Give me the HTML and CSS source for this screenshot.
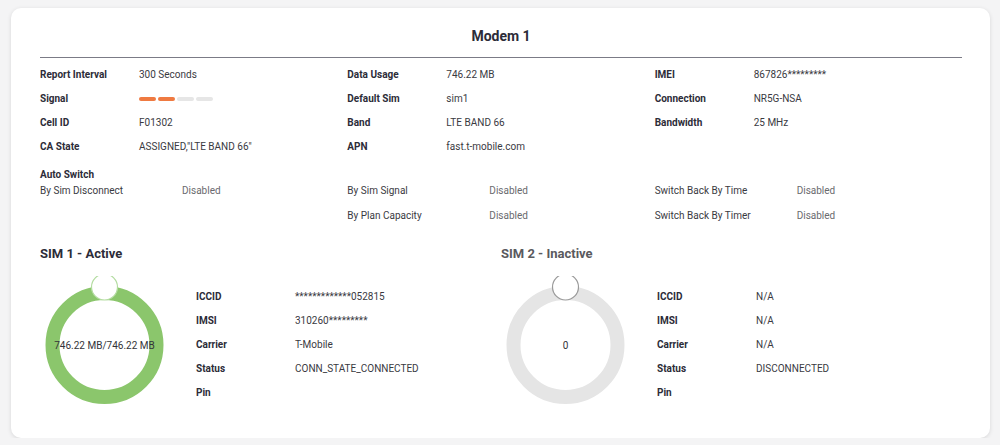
FILE: index.html
```html
<!DOCTYPE html>
<html>
<head>
<meta charset="utf-8">
<link rel="stylesheet" href="styles.css">
</head>
<body>
<div class="card">
  <div class="title">Modem 1</div>

  <div class="info-grid">
    <div class="kv"><span class="k">Report Interval</span><span class="v">300 Seconds</span></div>
    <div class="kv"><span class="k">Data Usage</span><span class="v">746.22 MB</span></div>
    <div class="kv"><span class="k">IMEI</span><span class="v">867826*********</span></div>

    <div class="kv"><span class="k">Signal</span><span class="v signal"><i class="bar on"></i><i class="bar on"></i><i class="bar"></i><i class="bar"></i></span></div>
    <div class="kv"><span class="k">Default Sim</span><span class="v">sim1</span></div>
    <div class="kv"><span class="k">Connection</span><span class="v">NR5G-NSA</span></div>

    <div class="kv"><span class="k">Cell ID</span><span class="v">F01302</span></div>
    <div class="kv"><span class="k">Band</span><span class="v">LTE BAND 66</span></div>
    <div class="kv"><span class="k">Bandwidth</span><span class="v">25 MHz</span></div>

    <div class="kv"><span class="k">CA State</span><span class="v">ASSIGNED,"LTE BAND 66"</span></div>
    <div class="kv"><span class="k">APN</span><span class="v">fast.t-mobile.com</span></div>
    <div class="kv"></div>
  </div>

  <div class="subhead">Auto Switch</div>
  <div class="switch-grid">
    <div class="kv sw"><span class="k">By Sim Disconnect</span><span class="v">Disabled</span></div>
    <div class="kv sw"><span class="k">By Sim Signal</span><span class="v">Disabled</span></div>
    <div class="kv sw"><span class="k">Switch Back By Time</span><span class="v">Disabled</span></div>

    <div class="kv sw"></div>
    <div class="kv sw"><span class="k">By Plan Capacity</span><span class="v">Disabled</span></div>
    <div class="kv sw"><span class="k">Switch Back By Timer</span><span class="v">Disabled</span></div>
  </div>

  <div class="sims">
    <div class="sim">
      <div class="sim-title">SIM 1 - Active</div>
      <div class="sim-body">
        <svg class="donut" width="130" height="130" viewBox="0 0 130 130">
          <circle cx="64.5" cy="69" r="52" fill="none" stroke="#8bc66c" stroke-width="14"/>
          <circle cx="64.5" cy="11" r="13" fill="#fff" stroke="#b3dca0" stroke-width="1.2"/>
          <text x="64.5" y="72.5" text-anchor="middle" class="donut-text">746.22 MB/746.22 MB</text>
        </svg>
        <div class="sim-info">
          <div class="kv"><span class="k">ICCID</span><span class="v">*************052815</span></div>
          <div class="kv"><span class="k">IMSI</span><span class="v">310260*********</span></div>
          <div class="kv"><span class="k">Carrier</span><span class="v">T-Mobile</span></div>
          <div class="kv"><span class="k">Status</span><span class="v">CONN_STATE_CONNECTED</span></div>
          <div class="kv"><span class="k">Pin</span><span class="v"></span></div>
        </div>
      </div>
    </div>
    <div class="sim">
      <div class="sim-title inactive">SIM 2 - Inactive</div>
      <div class="sim-body">
        <svg class="donut" width="130" height="130" viewBox="0 0 130 130">
          <circle cx="64.5" cy="69" r="52" fill="none" stroke="#e5e5e5" stroke-width="14"/>
          <circle cx="64.5" cy="11" r="13" fill="#fff" stroke="#9a9a9a" stroke-width="1.2"/>
          <text x="64.5" y="72.5" text-anchor="middle" class="donut-text">0</text>
        </svg>
        <div class="sim-info">
          <div class="kv"><span class="k">ICCID</span><span class="v">N/A</span></div>
          <div class="kv"><span class="k">IMSI</span><span class="v">N/A</span></div>
          <div class="kv"><span class="k">Carrier</span><span class="v">N/A</span></div>
          <div class="kv"><span class="k">Status</span><span class="v">DISCONNECTED</span></div>
          <div class="kv"><span class="k">Pin</span><span class="v"></span></div>
        </div>
      </div>
    </div>
  </div>
</div>
</body>
</html>
```

FILE: styles.css
```css
* { box-sizing: border-box; }

html, body {
  margin: 0;
  padding: 0;
  background: #f4f4f5;
  font-family: Roboto, "Liberation Sans", sans-serif;
  color: #333338;
}

body {
  padding: 8px 10px 0 11px;
}

.card {
  width: 979px;
  height: 430px;
  background: #fff;
  border-radius: 10px;
  box-shadow: 0 1px 4px rgba(0, 0, 0, 0.12);
  padding: 0 28px 0 29px;
}

.title {
  padding-top: 18px;
  padding-bottom: 11px;
  line-height: 20px;
  font-size: 14px;
  font-weight: 700;
  text-align: center;
  color: #2c2c38;
  border-bottom: 1px solid #7b7b86;
}

.info-grid,
.switch-grid {
  display: grid;
  grid-template-columns: repeat(3, 1fr);
  row-gap: 8px;
}

.info-grid {
  margin-top: 9px;
}

.switch-grid {
  row-gap: 9px;
}

.kv {
  display: flex;
  align-items: center;
  height: 16px;
  font-size: 10px;
  line-height: 16px;
}

.kv .k {
  width: 99px;
  flex: none;
  font-weight: 700;
  color: #2c2c38;
}

.kv .v {
  color: #3a3a3f;
}

.signal {
  display: flex;
  gap: 2px;
  align-items: center;
}

.bar {
  display: block;
  width: 17px;
  height: 4px;
  border-radius: 2px;
  background: #e6e6e6;
}

.bar.on {
  background: #ef7a41;
}

.subhead {
  margin-top: 12px;
  height: 16px;
  line-height: 16px;
  font-size: 10px;
  font-weight: 700;
  color: #2c2c38;
}

.kv.sw .k {
  width: 142px;
  font-weight: 400;
  color: #3a3a3f;
}

.kv.sw .v {
  color: #6a6a6e;
}

.sims {
  display: flex;
  margin-top: 21px;
}

.sim {
  width: 461px;
}

.sim-title {
  font-size: 13px;
  line-height: 18px;
  font-weight: 700;
  color: #2c2c38;
}

.sim-title.inactive {
  color: #5a5a5e;
}

.sim-body {
  display: flex;
  align-items: flex-start;
  margin-top: 13px;
  gap: 26px;
}

.donut {
  display: block;
  flex: none;
  overflow: hidden;
}

.donut-text {
  font-family: Roboto, "Liberation Sans", sans-serif;
  font-size: 10px;
  fill: #333338;
}

.sim-info {
  display: flex;
  flex-direction: column;
  gap: 8px;
  margin-top: 13px;
  width: 300px;
}
```
